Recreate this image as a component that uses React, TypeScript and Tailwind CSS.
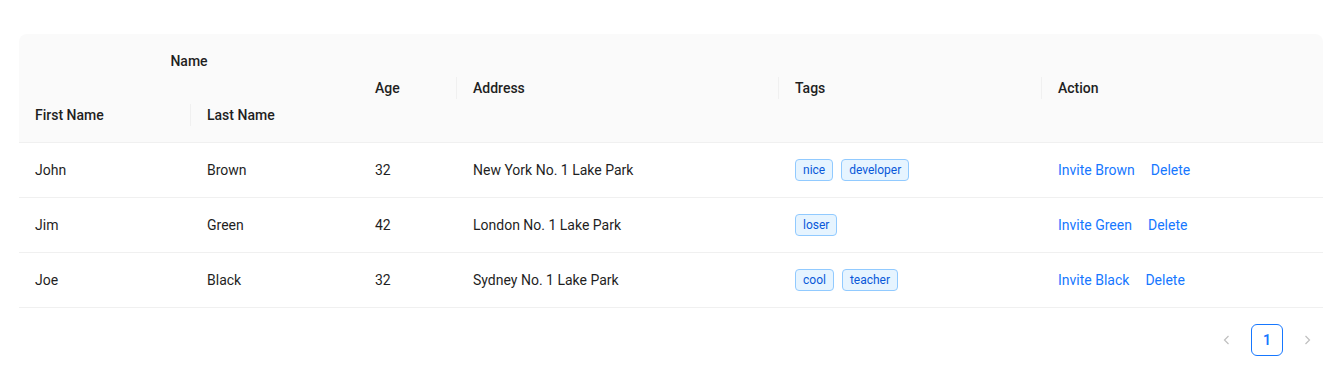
import React from 'react'

type Row = {
  key: string
  firstName: string
  lastName: string
  age: number
  address: string
  tags: string[]
}

const data: Row[] = [
  { key: '1', firstName: 'John', lastName: 'Brown', age: 32, address: 'New York No. 1 Lake Park', tags: ['nice', 'developer'] },
  { key: '2', firstName: 'Jim', lastName: 'Green', age: 42, address: 'London No. 1 Lake Park', tags: ['loser'] },
  { key: '3', firstName: 'Joe', lastName: 'Black', age: 32, address: 'Sydney No. 1 Lake Park', tags: ['cool', 'teacher'] },
]

function Divider() {
  return <span className="absolute right-0 top-1/2 h-[22px] w-px -translate-y-1/2 bg-[#f0f0f0]" />
}

function Th({
  children,
  divider,
  center,
  noBorder,
  className = '',
  ...rest
}: React.ThHTMLAttributes<HTMLTableCellElement> & { divider?: boolean; center?: boolean; noBorder?: boolean }) {
  return (
    <th
      {...rest}
      className={`relative bg-[#fafafa] p-4 font-medium leading-[22px] text-[#1f1f1f] ${center ? 'text-center' : 'text-left'} ${noBorder ? '' : 'border-b border-[#f0f0f0]'} ${className}`}
    >
      {children}
      {divider && <Divider />}
    </th>
  )
}

function Chevron({ dir }: { dir: 'left' | 'right' }) {
  return (
    <svg width="12" height="12" viewBox="0 0 12 12" fill="none" stroke="#bfbfbf" strokeWidth="1.2">
      {dir === 'left' ? <path d="M7.5 2 3.5 6l4 4" /> : <path d="M4.5 2l4 4-4 4" />}
    </svg>
  )
}

const td = 'border-b border-[#f0f0f0] p-4 leading-[22px]'

export default function App() {
  return (
    <div className="min-h-screen bg-white pl-[19px] pr-[10px] pt-[34px] text-sm text-[#1f1f1f]" style={{ fontFamily: 'Roboto, "Noto Sans", sans-serif' }}>
      <table className="w-[1304px] table-fixed border-separate border-spacing-0">
        <colgroup>
          <col className="w-[172px]" />
          <col className="w-[168px]" />
          <col className="w-[98px]" />
          <col className="w-[322px]" />
          <col className="w-[263px]" />
          <col className="w-[281px]" />
        </colgroup>
        <thead>
          <tr>
            <Th colSpan={2} center noBorder className="rounded-tl-lg">Name</Th>
            <Th rowSpan={2} divider>Age</Th>
            <Th rowSpan={2} divider>Address</Th>
            <Th rowSpan={2} divider>Tags</Th>
            <Th rowSpan={2} className="rounded-tr-lg">Action</Th>
          </tr>
          <tr>
            <Th divider>First Name</Th>
            <Th>Last Name</Th>
          </tr>
        </thead>
        <tbody>
          {data.map((r) => (
            <tr key={r.key}>
              <td className={td}>{r.firstName}</td>
              <td className={td}>{r.lastName}</td>
              <td className={td}>{r.age}</td>
              <td className={td}>{r.address}</td>
              <td className={td}>
                <div className="flex">
                  {r.tags.map((t) => (
                    <span
                      key={t}
                      className="mr-2 rounded border border-[#91caff] bg-[#e6f4ff] px-[7px] text-xs leading-5 text-[#0958d9]"
                    >
                      {t}
                    </span>
                  ))}
                </div>
              </td>
              <td className={td}>
                <div className="flex gap-4 text-[#1677ff]">
                  <a>Invite {r.lastName}</a>
                  <a>Delete</a>
                </div>
              </td>
            </tr>
          ))}
        </tbody>
      </table>

      <div className="my-4 flex w-[1304px] items-center justify-end">
        <span className="mr-2 flex h-8 w-8 items-center justify-center">
          <Chevron dir="left" />
        </span>
        <span className="mr-2 flex h-8 w-8 items-center justify-center rounded-md border border-[#1677ff] font-semibold text-[#1677ff]">
          1
        </span>
        <span className="flex h-8 w-8 items-center justify-center">
          <Chevron dir="right" />
        </span>
      </div>
    </div>
  )
}
